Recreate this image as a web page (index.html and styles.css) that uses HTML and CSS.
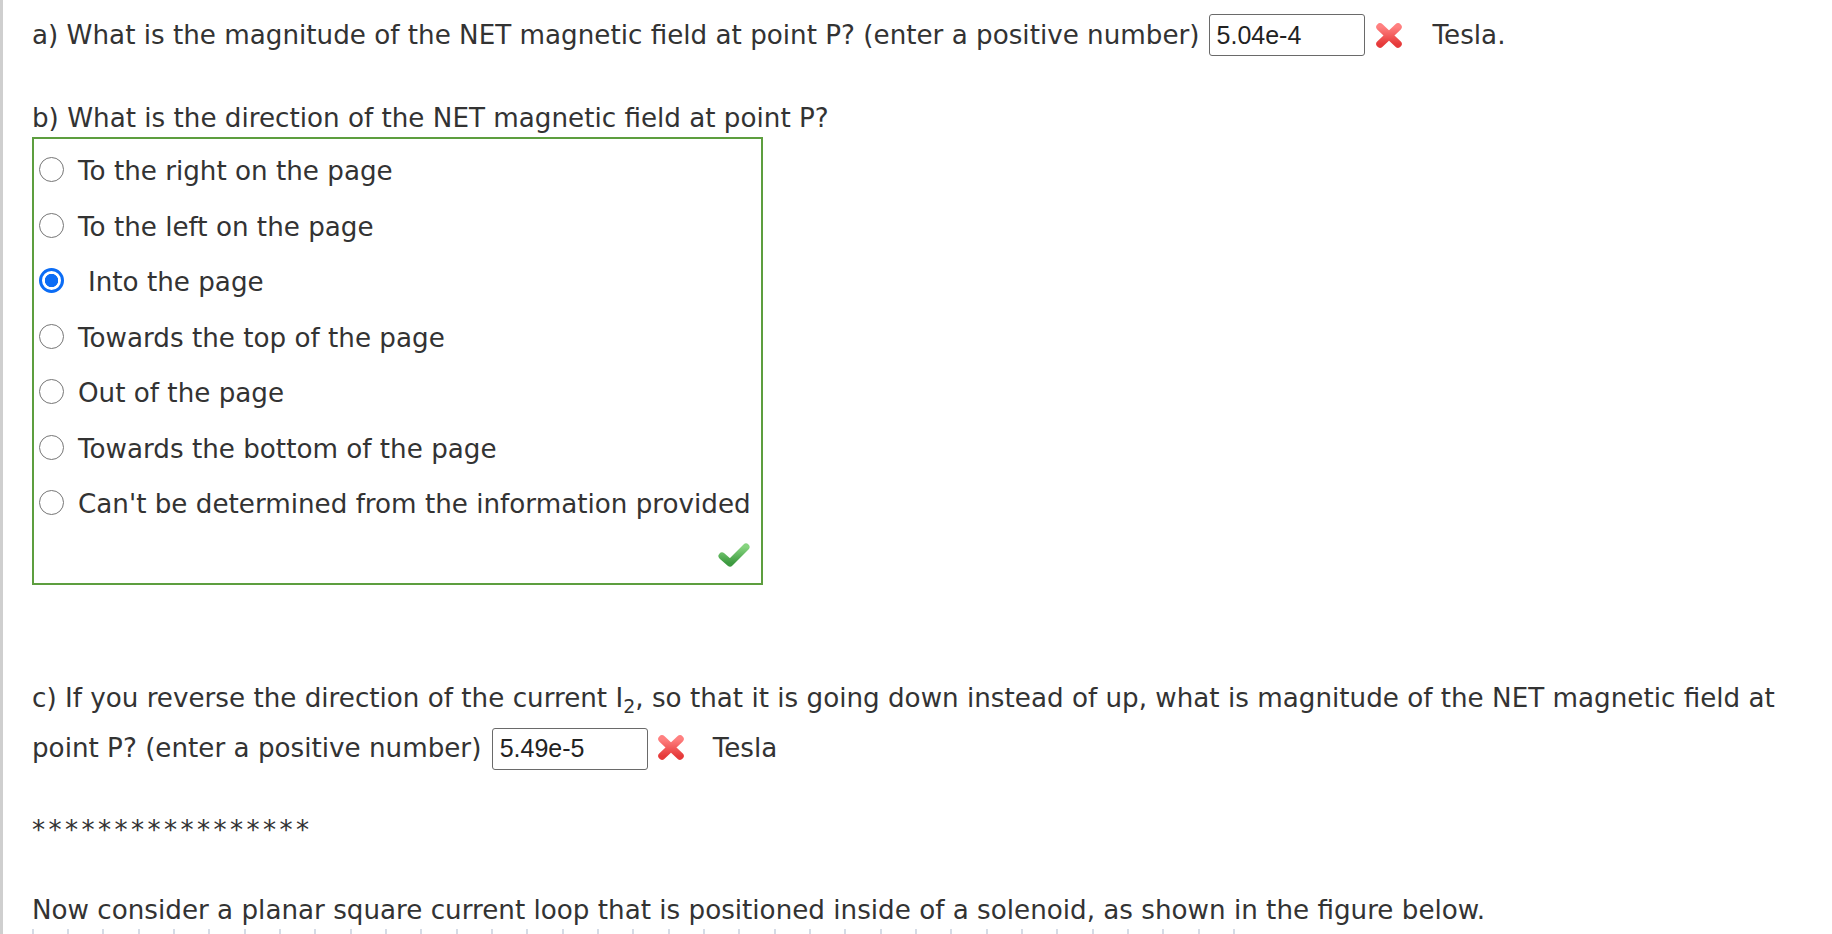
FILE: index.html
```html
<!DOCTYPE html>
<html>
<head>
<meta charset="utf-8">
<link rel="stylesheet" href="styles.css">
</head>
<body>
<div class="page">
  <div class="qa">
    <span class="qtext">a) What is the magnitude of the NET magnetic field at point P? (enter a positive number)</span>
    <span class="answer">5.04e-4</span>
    <svg class="xmark" width="28" height="27" viewBox="0 0 28 27"><defs><linearGradient id="xg" x1="0" y1="0" x2="0" y2="1"><stop offset="0" stop-color="#ff8080"/><stop offset="1" stop-color="#e63a3a"/></linearGradient></defs><path d="M5 5 L23 22 M23 5 L5 22" stroke="url(#xg)" stroke-width="7.5" stroke-linecap="round" fill="none"/></svg>
    <span class="unit">Tesla.</span>
  </div>

  <div class="qb">b) What is the direction of the NET magnetic field at point P?</div>
  <div class="choices">
    <div class="row"><span class="radio"></span><span class="label">To the right on the page</span></div>
    <div class="row"><span class="radio"></span><span class="label">To the left on the page</span></div>
    <div class="row"><span class="radio selected"></span><span class="label label-sel">Into the page</span></div>
    <div class="row"><span class="radio"></span><span class="label">Towards the top of the page</span></div>
    <div class="row"><span class="radio"></span><span class="label">Out of the page</span></div>
    <div class="row"><span class="radio"></span><span class="label">Towards the bottom of the page</span></div>
    <div class="row"><span class="radio"></span><span class="label">Can't be determined from the information provided</span></div>
    <div class="checkrow">
      <svg class="check" width="32" height="26" viewBox="0 0 32 26"><defs><linearGradient id="cg" x1="0" y1="0" x2="0" y2="1"><stop offset="0" stop-color="#86d47f"/><stop offset="1" stop-color="#3d9a40"/></linearGradient></defs><path d="M4 14 L12 21 L28 5" stroke="url(#cg)" stroke-width="7" stroke-linecap="round" stroke-linejoin="round" fill="none"/></svg>
    </div>
  </div>

  <div class="qc">c) If you reverse the direction of the current I<sub class="sub">2</sub>, so that it is going down instead of up, what is magnitude of the NET magnetic field at<br>point P? (enter a positive number) <span class="answer answer-inline">5.49e-5</span><svg class="xmark xmark-inline" width="28" height="27" viewBox="0 0 28 27"><defs><linearGradient id="xg2" x1="0" y1="0" x2="0" y2="1"><stop offset="0" stop-color="#ff8080"/><stop offset="1" stop-color="#e63a3a"/></linearGradient></defs><path d="M5 5 L23 22 M23 5 L5 22" stroke="url(#xg2)" stroke-width="7.5" stroke-linecap="round" fill="none"/></svg><span class="unit-inline">Tesla</span></div>

  <div class="stars">*****************</div>

  <div class="now">Now consider a planar square current loop that is positioned inside of a solenoid, as shown in the figure below.</div>

  <div class="figure">
    <svg width="1240" height="12" viewBox="0 0 1240 12">
      <g stroke="#b9c4d6" stroke-width="1.2">
        <line x1="1" y1="0" x2="1" y2="12"/><line x1="36" y1="0" x2="36" y2="12"/><line x1="71" y1="0" x2="71" y2="12"/><line x1="107" y1="0" x2="107" y2="12"/><line x1="142" y1="0" x2="142" y2="12"/><line x1="177" y1="0" x2="177" y2="12"/><line x1="213" y1="0" x2="213" y2="12"/><line x1="248" y1="0" x2="248" y2="12"/><line x1="283" y1="0" x2="283" y2="12"/><line x1="319" y1="0" x2="319" y2="12"/><line x1="354" y1="0" x2="354" y2="12"/><line x1="389" y1="0" x2="389" y2="12"/><line x1="425" y1="0" x2="425" y2="12"/><line x1="460" y1="0" x2="460" y2="12"/><line x1="495" y1="0" x2="495" y2="12"/><line x1="531" y1="0" x2="531" y2="12"/><line x1="566" y1="0" x2="566" y2="12"/><line x1="601" y1="0" x2="601" y2="12"/><line x1="637" y1="0" x2="637" y2="12"/><line x1="672" y1="0" x2="672" y2="12"/><line x1="707" y1="0" x2="707" y2="12"/><line x1="743" y1="0" x2="743" y2="12"/><line x1="778" y1="0" x2="778" y2="12"/><line x1="813" y1="0" x2="813" y2="12"/><line x1="849" y1="0" x2="849" y2="12"/><line x1="884" y1="0" x2="884" y2="12"/><line x1="919" y1="0" x2="919" y2="12"/><line x1="955" y1="0" x2="955" y2="12"/><line x1="990" y1="0" x2="990" y2="12"/><line x1="1025" y1="0" x2="1025" y2="12"/><line x1="1061" y1="0" x2="1061" y2="12"/><line x1="1096" y1="0" x2="1096" y2="12"/><line x1="1131" y1="0" x2="1131" y2="12"/><line x1="1167" y1="0" x2="1167" y2="12"/><line x1="1202" y1="0" x2="1202" y2="12"/>
      </g>
    </svg>
  </div>
</div>
</body>
</html>
```

FILE: styles.css
```css
html, body {
  margin: 0;
  padding: 0;
  background: #ffffff;
}
body {
  font-family: "DejaVu Sans", Verdana, sans-serif;
  font-size: 26.2px;
  color: #333333;
  overflow: hidden;
}
.page {
  border-left: 3px solid #cfcfcf;
  padding-left: 29px;
  height: 934px;
  box-sizing: border-box;
}
.qa {
  display: flex;
  align-items: center;
  height: 42px;
  padding-top: 14px;
}
.qtext {
  white-space: nowrap;
}
.answer {
  display: inline-flex;
  align-items: center;
  box-sizing: border-box;
  width: 156px;
  height: 42px;
  margin-left: 9px;
  padding: 0 7px;
  border: 1.5px solid #6a6a6a;
  border-radius: 3px;
  font-family: "Liberation Sans", Arial, sans-serif;
  font-size: 25px;
  color: #222222;
}
.xmark {
  margin-left: 10px;
  flex: none;
}
.unit {
  margin-left: 30px;
}
.qb {
  margin-top: 47px;
  line-height: 30px;
  height: 30px;
}
.choices {
  margin-top: 4px;
  box-sizing: border-box;
  width: 731px;
  height: 448px;
  border: 2px solid #5d9e3f;
  padding-top: 3px;
  display: flex;
  flex-direction: column;
}
.row {
  display: flex;
  align-items: center;
  height: 55.5px;
  padding-left: 5px;
}
.radio {
  flex: none;
  box-sizing: border-box;
  width: 25px;
  height: 25px;
  border-radius: 50%;
  border: 1.6px solid #767676;
  background: #ffffff;
}
.radio.selected {
  border: 3px solid #0b6cf5;
  background: radial-gradient(circle, #0b6cf5 0 6.3px, #ffffff 7px);
}
.label {
  margin-left: 14px;
  line-height: 30px;
  padding-top: 3px;
  white-space: nowrap;
}
.label-sel {
  margin-left: 24px;
}
.checkrow {
  display: flex;
  justify-content: flex-end;
  padding-top: 11px;
  padding-right: 11px;
}
.qc {
  margin-top: 88px;
  line-height: 50px;
  white-space: nowrap;
}
.sub {
  font-size: 19px;
  line-height: 0;
  vertical-align: -6px;
}
.answer-inline {
  margin-left: 2px;
  vertical-align: baseline;
  line-height: normal;
}
.xmark-inline {
  margin-left: 9px;
  vertical-align: -4px;
}
.unit-inline {
  margin-left: 28px;
}
.stars {
  margin-top: 42px;
  line-height: 30px;
  letter-spacing: 3.4px;
}
.now {
  margin-top: 50px;
  line-height: 30px;
  white-space: nowrap;
}
.figure {
  margin-top: 4px;
  line-height: 0;
}
```
